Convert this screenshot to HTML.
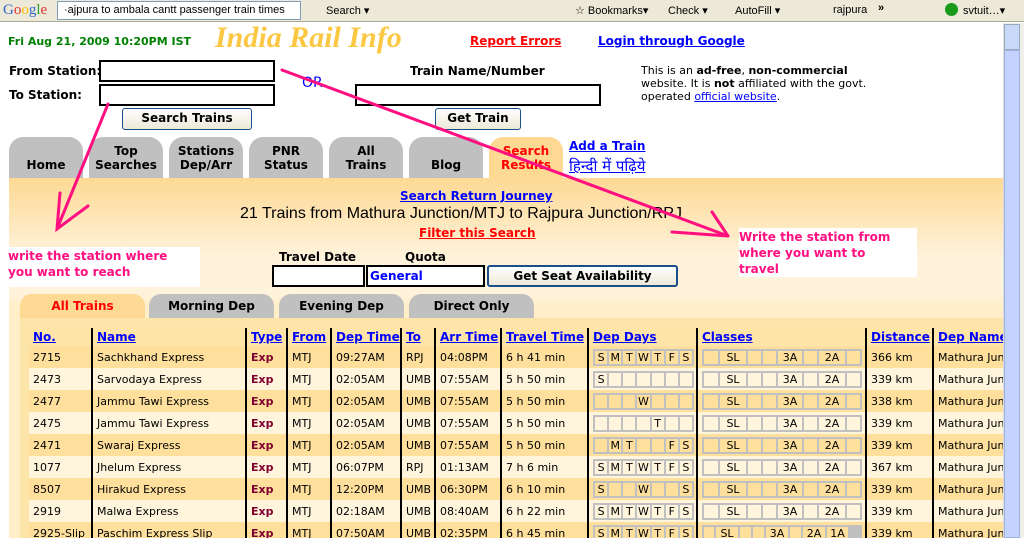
<!DOCTYPE html>
<html><head><meta charset="utf-8"><style>
*{margin:0;padding:0;box-sizing:border-box}
body{width:1024px;height:538px;overflow:hidden;background:#fff;font-family:"DejaVu Sans","Liberation Sans",sans-serif;font-size:11px;position:relative}
.a{position:absolute;white-space:nowrap}
.tb{position:absolute;left:0;top:0;width:1024px;height:22px;background:#ece9d8;border-bottom:1px solid #aca899;font-family:"Liberation Sans",sans-serif;font-size:11px;color:#000;z-index:5}
.inp{position:absolute;border:2px solid #000;background:#fff}
.btn{position:absolute;border:1px solid #1c4f8a;border-radius:3px;background:linear-gradient(#fff,#ece9d8);font-weight:bold;font-size:12px;text-align:center;line-height:19px}
.tab{position:absolute;top:137px;width:74px;height:41px;background:#c0c0c0;border-radius:14px 14px 0 0;text-align:center;font-weight:bold;font-size:12px;line-height:14px;padding-top:7px}
.panel{position:absolute;left:9px;top:178px;width:994px;height:360px;background:linear-gradient(#fdd994 0,#fff3dc 80px,#fff3dc 115px,#ffeec8 130px)}
.st{position:absolute;top:294px;width:125px;height:25px;background:#c0c0c0;border-radius:12px 12px 0 0;text-align:center;font-weight:bold;font-size:12px;line-height:25px}
.clip{position:absolute;left:29px;top:328px;width:974px;height:210px;overflow:hidden}
table{border-collapse:collapse;table-layout:fixed;width:1000px}
td,th{height:22px;padding:0 0 0 4px;border-right:2px solid #000;white-space:nowrap;overflow:hidden;text-align:left;font-weight:normal}
th{height:18px;color:#00f;font-weight:bold;text-decoration:underline;font-size:12px;background:#ffe4a8}
tr.o td{background:#ffdf9c}tr.e td{background:#fff4dc}
.x{color:#800030;font-weight:bold}
.d{display:flex;gap:2px;background:#c0c0c0;padding:2px;height:17px;width:101px}
.d span{flex:1;text-align:center;line-height:13px;font-size:11px}
tr.o .d span{background:#ffdf9c}tr.e .d span{background:#fff4dc}
.c{display:flex;gap:2px;background:#c0c0c0;padding:2px;height:17px;width:160px}
.c span{text-align:center;line-height:13px}
tr.o .c span{background:#ffdf9c}tr.e .c span{background:#fff4dc}
.sb{z-index:6}
</style></head><body>
<div class="tb">
<span class="a" style="left:3px;top:2px;font-family:'Liberation Serif',serif;font-size:15px;color:#3366cc">G<span style="color:#d33">o</span><span style="color:#fb0">o</span>g<span style="color:#393">l</span><span style="color:#d33">e</span></span>
<div class="a" style="left:57px;top:1px;width:244px;height:19px;background:#fff;border:1px solid #7f9db9;padding:2px 6px;font-size:11px">·ajpura to ambala cantt passenger train times</div>
<span class="a" style="left:326px;top:4px">Search ▾</span>
<span class="a" style="left:575px;top:4px">☆ Bookmarks▾</span>
<span class="a" style="left:668px;top:4px">Check ▾</span>
<span class="a" style="left:735px;top:4px">AutoFill ▾</span>
<span class="a" style="left:833px;top:4px">rajpura</span>
<span class="a" style="left:878px;top:2px;font-weight:bold">»</span>
<span class="a" style="left:945px;top:3px;width:13px;height:13px;border-radius:50%;background:#1a9a1a"></span>
<span class="a" style="left:963px;top:4px">svtuit…▾</span>
</div>

<span class="a" style="left:8px;top:35px;color:#008000;font-weight:bold;font-size:11px">Fri Aug 21, 2009 10:20PM IST</span>
<span class="a" style="left:215px;top:21px;color:#fcc844;font-family:'Liberation Serif',serif;font-style:italic;font-weight:bold;font-size:30px">India Rail Info</span>
<span class="a" style="left:470px;top:34px;color:red;font-weight:bold;font-size:12px;text-decoration:underline">Report Errors</span>
<span class="a" style="left:598px;top:34px;color:#00f;font-weight:bold;font-size:12px;text-decoration:underline">Login through Google</span>
<span class="a" style="left:9px;top:64px;font-weight:bold;font-size:12px">From Station:</span>
<span class="a" style="left:9px;top:88px;font-weight:bold;font-size:12px">To Station:</span>
<div class="inp" style="left:99px;top:60px;width:176px;height:22px"></div>
<div class="inp" style="left:99px;top:84px;width:176px;height:22px"></div>
<div class="btn" style="left:122px;top:108px;width:130px;height:22px">Search Trains</div>
<span class="a" style="left:302px;top:75px;color:#00f;font-size:14px">OR</span>
<span class="a" style="left:410px;top:64px;font-weight:bold;font-size:12px">Train Name/Number</span>
<div class="inp" style="left:355px;top:84px;width:246px;height:22px"></div>
<div class="btn" style="left:435px;top:108px;width:86px;height:22px">Get Train</div>
<div class="a" style="left:641px;top:64px;font-size:11px;line-height:13px">This is an <b>ad-free</b>, <b>non-commercial</b><br>website. It is <b>not</b> affiliated with the govt.<br>operated <u style="color:#00f">official website</u>.</div>

<div class="tab" style="left:9px;padding-top:21px">Home</div>
<div class="tab" style="left:89px">Top<br>Searches</div>
<div class="tab" style="left:169px">Stations<br>Dep/Arr</div>
<div class="tab" style="left:249px">PNR<br>Status</div>
<div class="tab" style="left:329px">All<br>Trains</div>
<div class="tab" style="left:409px;padding-top:21px">Blog</div>
<div class="tab" style="left:489px;background:#fdd994;color:red">Search<br>Results</div>
<span class="a" style="left:569px;top:139px;color:#00f;font-weight:bold;font-size:12px;text-decoration:underline">Add a Train</span>
<span class="a" style="left:569px;top:156px;color:#00f;font-size:15px;text-decoration:underline;font-family:'DejaVu Sans',sans-serif">हिन्दी में पढ़िये</span>

<div class="panel"></div>
<span class="a" style="left:400px;top:189px;color:#00f;font-weight:bold;font-size:12px;text-decoration:underline">Search Return Journey</span>
<span class="a" style="left:240px;top:205px;font-family:'Liberation Sans',sans-serif;font-size:16px">21 Trains from Mathura Junction/MTJ to Rajpura Junction/RPJ</span>
<span class="a" style="left:419px;top:226px;color:red;font-weight:bold;font-size:12px;text-decoration:underline">Filter this Search</span>
<div class="a" style="left:8px;top:247px;width:192px;height:40px;background:#fff"></div>
<div class="a" style="left:8px;top:248px;color:#ff1080;font-weight:bold;font-size:12px;line-height:16px">write the station where<br>you want to reach</div>
<div class="a" style="left:739px;top:228px;width:178px;height:49px;background:#fff"></div>
<div class="a" style="left:739px;top:229px;color:#ff1080;font-weight:bold;font-size:12px;line-height:16px">Write the station from<br>where you want to<br>travel</div>
<span class="a" style="left:279px;top:250px;font-weight:bold;font-size:12px">Travel Date</span>
<span class="a" style="left:405px;top:250px;font-weight:bold;font-size:12px">Quota</span>
<div class="inp" style="left:272px;top:265px;width:93px;height:22px"></div>
<div class="inp" style="left:366px;top:265px;width:119px;height:22px;color:#00f;font-weight:bold;font-size:12px;padding:2px">General</div>
<div class="btn" style="left:487px;top:265px;width:191px;height:22px;border:2px solid #1c4f8a">Get Seat Availability</div>

<div class="st" style="left:20px;background:#fdd994;color:red">All Trains</div>
<div class="st" style="left:149px">Morning Dep</div>
<div class="st" style="left:279px">Evening Dep</div>
<div class="st" style="left:409px">Direct Only</div>
<div class="a" style="left:20px;top:318px;width:983px;height:220px;background:#fde4a8"></div>

<div class="clip"><table>
<colgroup><col style="width:63px"><col style="width:154px"><col style="width:41px"><col style="width:44px"><col style="width:70px"><col style="width:34px"><col style="width:66px"><col style="width:87px"><col style="width:109px"><col style="width:169px"><col style="width:67px"><col style="width:96px"></colgroup>
<tr><th>No.</th><th>Name</th><th>Type</th><th>From</th><th>Dep Time</th><th>To</th><th>Arr Time</th><th>Travel Time</th><th>Dep Days</th><th>Classes</th><th>Distance</th><th>Dep Name</th></tr>
<tr class="o"><td>2715</td><td>Sachkhand Express</td><td class="x">Exp</td><td>MTJ</td><td>09:27AM</td><td>RPJ</td><td>04:08PM</td><td>6 h 41 min</td><td><div class="d"><span>S</span><span>M</span><span>T</span><span>W</span><span>T</span><span>F</span><span>S</span></div></td><td><div class="c"><span style="width:14px"></span><span style="width:26px">SL</span><span style="width:13px"></span><span style="width:13px"></span><span style="width:24px">3A</span><span style="width:13px"></span><span style="width:26px">2A</span><span style="width:13px"></span></div></td><td>366 km</td><td>Mathura Jun</td></tr>
<tr class="e"><td>2473</td><td>Sarvodaya Express</td><td class="x">Exp</td><td>MTJ</td><td>02:05AM</td><td>UMB</td><td>07:55AM</td><td>5 h 50 min</td><td><div class="d"><span>S</span><span></span><span></span><span></span><span></span><span></span><span></span></div></td><td><div class="c"><span style="width:14px"></span><span style="width:26px">SL</span><span style="width:13px"></span><span style="width:13px"></span><span style="width:24px">3A</span><span style="width:13px"></span><span style="width:26px">2A</span><span style="width:13px"></span></div></td><td>339 km</td><td>Mathura Jun</td></tr>
<tr class="o"><td>2477</td><td>Jammu Tawi Express</td><td class="x">Exp</td><td>MTJ</td><td>02:05AM</td><td>UMB</td><td>07:55AM</td><td>5 h 50 min</td><td><div class="d"><span></span><span></span><span></span><span>W</span><span></span><span></span><span></span></div></td><td><div class="c"><span style="width:14px"></span><span style="width:26px">SL</span><span style="width:13px"></span><span style="width:13px"></span><span style="width:24px">3A</span><span style="width:13px"></span><span style="width:26px">2A</span><span style="width:13px"></span></div></td><td>338 km</td><td>Mathura Jun</td></tr>
<tr class="e"><td>2475</td><td>Jammu Tawi Express</td><td class="x">Exp</td><td>MTJ</td><td>02:05AM</td><td>UMB</td><td>07:55AM</td><td>5 h 50 min</td><td><div class="d"><span></span><span></span><span></span><span></span><span>T</span><span></span><span></span></div></td><td><div class="c"><span style="width:14px"></span><span style="width:26px">SL</span><span style="width:13px"></span><span style="width:13px"></span><span style="width:24px">3A</span><span style="width:13px"></span><span style="width:26px">2A</span><span style="width:13px"></span></div></td><td>339 km</td><td>Mathura Jun</td></tr>
<tr class="o"><td>2471</td><td>Swaraj Express</td><td class="x">Exp</td><td>MTJ</td><td>02:05AM</td><td>UMB</td><td>07:55AM</td><td>5 h 50 min</td><td><div class="d"><span></span><span>M</span><span>T</span><span></span><span></span><span>F</span><span>S</span></div></td><td><div class="c"><span style="width:14px"></span><span style="width:26px">SL</span><span style="width:13px"></span><span style="width:13px"></span><span style="width:24px">3A</span><span style="width:13px"></span><span style="width:26px">2A</span><span style="width:13px"></span></div></td><td>339 km</td><td>Mathura Jun</td></tr>
<tr class="e"><td>1077</td><td>Jhelum Express</td><td class="x">Exp</td><td>MTJ</td><td>06:07PM</td><td>RPJ</td><td>01:13AM</td><td>7 h 6 min</td><td><div class="d"><span>S</span><span>M</span><span>T</span><span>W</span><span>T</span><span>F</span><span>S</span></div></td><td><div class="c"><span style="width:14px"></span><span style="width:26px">SL</span><span style="width:13px"></span><span style="width:13px"></span><span style="width:24px">3A</span><span style="width:13px"></span><span style="width:26px">2A</span><span style="width:13px"></span></div></td><td>367 km</td><td>Mathura Jun</td></tr>
<tr class="o"><td>8507</td><td>Hirakud Express</td><td class="x">Exp</td><td>MTJ</td><td>12:20PM</td><td>UMB</td><td>06:30PM</td><td>6 h 10 min</td><td><div class="d"><span>S</span><span></span><span></span><span>W</span><span></span><span></span><span>S</span></div></td><td><div class="c"><span style="width:14px"></span><span style="width:26px">SL</span><span style="width:13px"></span><span style="width:13px"></span><span style="width:24px">3A</span><span style="width:13px"></span><span style="width:26px">2A</span><span style="width:13px"></span></div></td><td>339 km</td><td>Mathura Jun</td></tr>
<tr class="e"><td>2919</td><td>Malwa Express</td><td class="x">Exp</td><td>MTJ</td><td>02:18AM</td><td>UMB</td><td>08:40AM</td><td>6 h 22 min</td><td><div class="d"><span>S</span><span>M</span><span>T</span><span>W</span><span>T</span><span>F</span><span>S</span></div></td><td><div class="c"><span style="width:14px"></span><span style="width:26px">SL</span><span style="width:13px"></span><span style="width:13px"></span><span style="width:24px">3A</span><span style="width:13px"></span><span style="width:26px">2A</span><span style="width:13px"></span></div></td><td>339 km</td><td>Mathura Jun</td></tr>
<tr class="o"><td>2925-Slip</td><td>Paschim Express Slip</td><td class="x">Exp</td><td>MTJ</td><td>07:50AM</td><td>UMB</td><td>02:35PM</td><td>6 h 45 min</td><td><div class="d"><span>S</span><span>M</span><span>T</span><span>W</span><span>T</span><span>F</span><span>S</span></div></td><td><div class="c"><span style="width:10px"></span><span style="width:22px">SL</span><span style="width:11px"></span><span style="width:11px"></span><span style="width:22px">3A</span><span style="width:11px"></span><span style="width:22px">2A</span><span style="width:21px">1A</span></div></td><td>339 km</td><td>Mathura Jun</td></tr>
</table></div>

<div class="a sb" style="left:1003px;top:23px;width:21px;height:515px;background:#f0f0ea;border-left:1px solid #ddd"></div>
<div class="a sb" style="left:1004px;top:24px;width:16px;height:26px;background:#c8d8f8;border:1px solid #9ab"></div>
<div class="a sb" style="left:1004px;top:50px;width:16px;height:488px;background:#c3d3fd;border:1px solid #a0b0e0"></div>

<svg class="a" style="left:0;top:0;z-index:4" width="1024" height="538">
<g stroke="#ff0f80" stroke-width="3" fill="none" stroke-linecap="round">
<path d="M282 70 L728 236 M712 212 L728 236 M672 232 L728 236"/>
<path d="M108 104 L57 229 M60 193 L57 229 L88 206"/>
</g></svg>
</body></html>
